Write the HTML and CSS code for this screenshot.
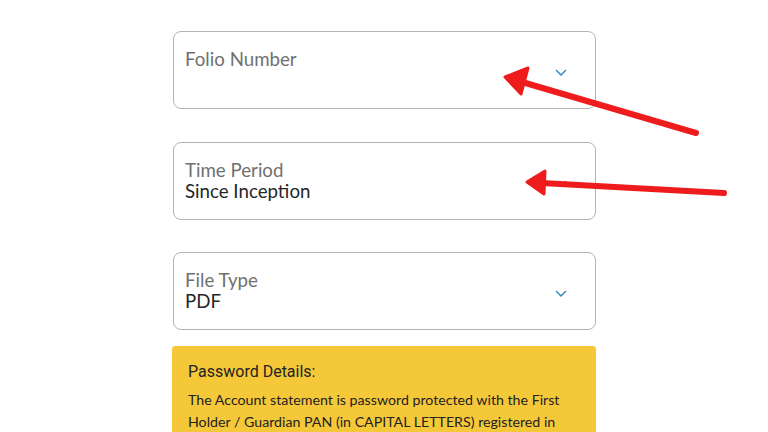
FILE: index.html
```html
<!DOCTYPE html>
<html>
<head>
<meta charset="utf-8">
<link rel="stylesheet" href="styles.css">
</head>
<body>
<div class="page">
  <div class="form">
    <div class="field">
      <div class="texts">
        <div class="label">Folio Number</div>
        <div class="value">&nbsp;</div>
      </div>
      <svg class="chev" width="12" height="8" viewBox="0 0 12 8"><path d="M1.5 1.5 L6 6 L10.5 1.5" fill="none" stroke="#3d8fc2" stroke-width="1.6" stroke-linecap="round" stroke-linejoin="round"/></svg>
    </div>
    <div class="field">
      <div class="texts">
        <div class="label">Time Period</div>
        <div class="value">Since Inception</div>
      </div>
      <svg class="chev" width="12" height="8" viewBox="0 0 12 8"><path d="M1.5 1.5 L6 6 L10.5 1.5" fill="none" stroke="#3d8fc2" stroke-width="1.6" stroke-linecap="round" stroke-linejoin="round"/></svg>
    </div>
    <div class="field">
      <div class="texts">
        <div class="label">File Type</div>
        <div class="value">PDF</div>
      </div>
      <svg class="chev" width="12" height="8" viewBox="0 0 12 8"><path d="M1.5 1.5 L6 6 L10.5 1.5" fill="none" stroke="#3d8fc2" stroke-width="1.6" stroke-linecap="round" stroke-linejoin="round"/></svg>
    </div>
    <div class="notice">
      <div class="notice-title">Password Details:</div>
      <p class="notice-text">The Account statement is password protected with the First Holder / Guardian PAN (in CAPITAL LETTERS) registered in the folio.</p>
    </div>
  </div>
  <svg class="arrows" width="768" height="432" viewBox="0 0 768 432">
    <line x1="696" y1="133" x2="522" y2="82" stroke="#ee1c1c" stroke-width="6" stroke-linecap="round"/>
    <polygon points="505,77 528,68 521,94" fill="#ee1c1c" stroke="#ee1c1c" stroke-width="3" stroke-linejoin="round"/>
    <line x1="724" y1="193" x2="542" y2="183" stroke="#ee1c1c" stroke-width="6" stroke-linecap="round"/>
    <polygon points="527,182 545,171 544,194" fill="#ee1c1c" stroke="#ee1c1c" stroke-width="3" stroke-linejoin="round"/>
  </svg>
</div>
</body>
</html>
```

FILE: styles.css
```css
html, body {
  margin: 0;
  padding: 0;
  background: #ffffff;
  overflow: hidden;
}
.page {
  position: relative;
  width: 768px;
  height: 432px;
  overflow: hidden;
  font-family: "Lato", "Noto Sans", sans-serif;
}
.form {
  width: 424px;
  margin-left: 172px;
  padding-top: 31px;
  display: flex;
  flex-direction: column;
}
.field {
  box-sizing: border-box;
  width: 423px;
  height: 78px;
  margin-left: 1px;
  margin-bottom: 32.5px;
  border: 1.5px solid #b4b4b4;
  border-radius: 8px;
  display: flex;
  align-items: center;
  padding: 0 28px 0 11px;
}
.field:nth-child(3) {
  margin-bottom: 16px;
}
.texts {
  flex: 1;
  display: flex;
  flex-direction: column;
}
.label {
  font-size: 18.7px;
  line-height: 21px;
  color: #707070;
}
.value {
  font-size: 18.7px;
  line-height: 21px;
  color: #262626;
}
.chev {
  display: block;
  margin-top: 6px;
}
.notice {
  background: #f5c83a;
  border-radius: 3px;
  padding: 16px 28px 12px 16px;
  height: 120px;
}
.notice-title {
  font-family: "Roboto", "Noto Sans", sans-serif;
  font-size: 16px;
  line-height: 20px;
  color: #222;
  margin-bottom: 7px;
}
.notice-text {
  margin: 0;
  font-size: 14.2px;
  line-height: 21.5px;
  color: #222;
}
.arrows {
  position: absolute;
  left: 0;
  top: 0;
  pointer-events: none;
}
```
